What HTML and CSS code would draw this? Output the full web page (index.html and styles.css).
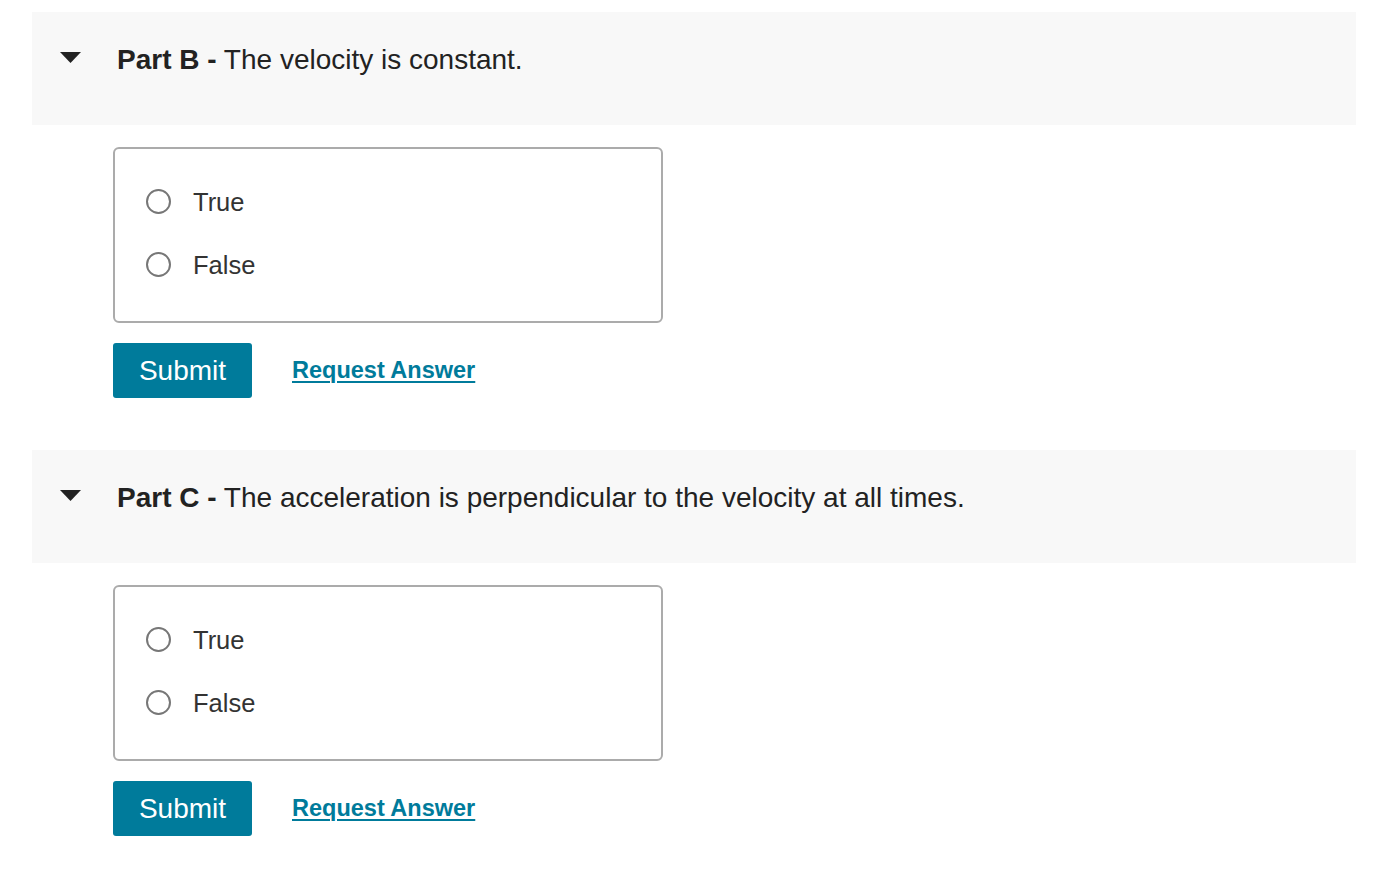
FILE: index.html
```html
<!DOCTYPE html>
<html lang="en">
<head>
<meta charset="utf-8">
<title>Parts</title>
<link rel="stylesheet" href="styles.css">
</head>
<body>
<main class="page">
  <section class="part">
    <div class="part-header">
      <svg class="caret" width="21" height="11" viewBox="0 0 21 11"><path d="M0 0 H21 L10.5 11 Z" fill="#222"/></svg>
      <h2 class="part-title"><b>Part B -</b> The velocity is constant.</h2>
    </div>
    <div class="part-body">
      <div class="choices">
        <label class="choice"><span class="radio"></span><span class="choice-label">True</span></label>
        <label class="choice"><span class="radio"></span><span class="choice-label">False</span></label>
      </div>
      <div class="actions">
        <button class="submit">Submit</button>
        <a class="request" href="#">Request Answer</a>
      </div>
    </div>
  </section>
  <section class="part">
    <div class="part-header">
      <svg class="caret" width="21" height="11" viewBox="0 0 21 11"><path d="M0 0 H21 L10.5 11 Z" fill="#222"/></svg>
      <h2 class="part-title"><b>Part C -</b> The acceleration is perpendicular to the velocity at all times.</h2>
    </div>
    <div class="part-body">
      <div class="choices">
        <label class="choice"><span class="radio"></span><span class="choice-label">True</span></label>
        <label class="choice"><span class="radio"></span><span class="choice-label">False</span></label>
      </div>
      <div class="actions">
        <button class="submit">Submit</button>
        <a class="request" href="#">Request Answer</a>
      </div>
    </div>
  </section>
</main>
</body>
</html>
```

FILE: styles.css
```css
* { box-sizing: border-box; }
html, body { margin: 0; padding: 0; background: #fff; }
body { font-family: "Liberation Sans", Arial, Helvetica, sans-serif; color: #222; }
.page { padding: 12px 33px 0 32px; }
.part { margin-bottom: 52px; }
.part-header {
  display: flex;
  align-items: flex-start;
  height: 113px;
  padding: 31px 0 0 28px;
  background: #f8f8f8;
}
.caret { flex: none; margin-top: 9px; margin-right: 36px; }
.part-title {
  margin: 0;
  font-size: 28px;
  line-height: 34px;
  font-weight: normal;
  color: #222;
}
.part-title b { font-weight: bold; }
.part-body { padding-left: 81px; }
.choices {
  margin-top: 22px;
  width: 550px;
  height: 176px;
  border: 2px solid #ababab;
  border-radius: 6px;
  padding: 21px 0 0 31px;
  display: flex;
  flex-direction: column;
}
.choice {
  display: flex;
  align-items: center;
  height: 63px;
  gap: 22px;
}
.radio {
  flex: none;
  width: 25px;
  height: 25px;
  border: 2px solid #777;
  border-radius: 50%;
  background: #fff;
}
.choice-label { font-size: 25.5px; line-height: 30px; color: #333; }
.actions {
  margin-top: 20px;
  display: flex;
  align-items: center;
  gap: 40px;
}
.submit {
  width: 139px;
  height: 55px;
  border: none;
  border-radius: 3px;
  background: #007b9b;
  color: #fff;
  font-family: "Liberation Sans", Arial, sans-serif;
  font-size: 28px;
  padding: 0;
}
.request {
  color: #007b9b;
  font-weight: bold;
  font-size: 23.5px;
  text-decoration: underline;
  text-decoration-thickness: 2px;
  text-underline-offset: 3px;
}
```
